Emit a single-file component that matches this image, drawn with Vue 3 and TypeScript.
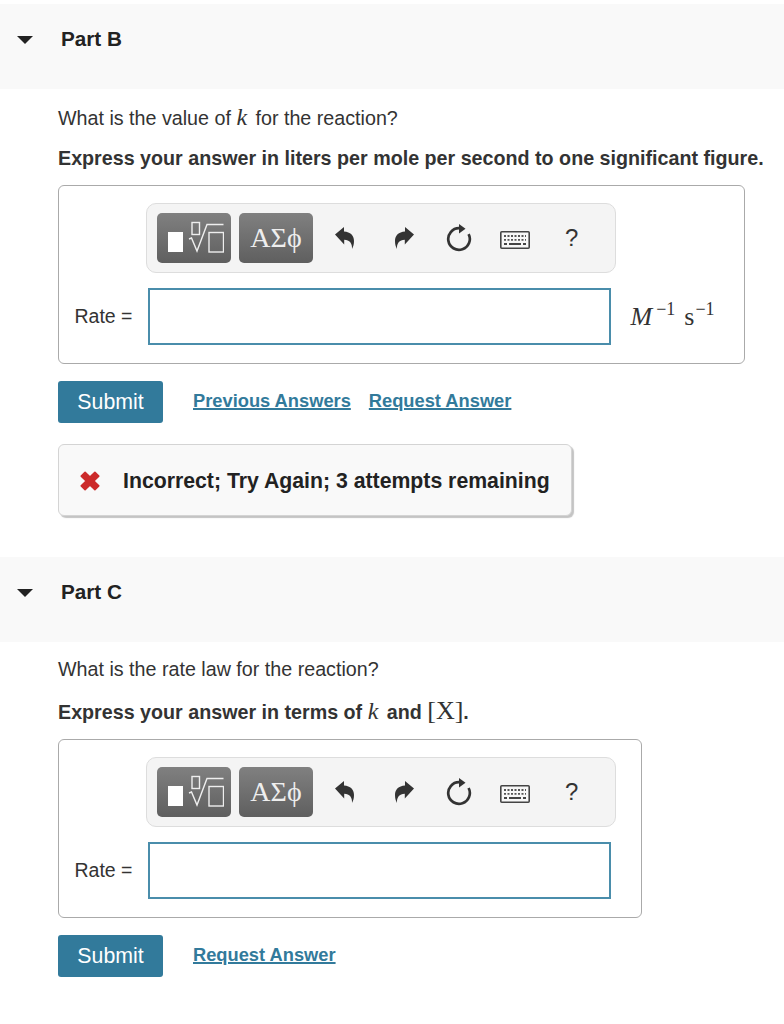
<script setup lang="ts">
interface Part {
  name: string
  units: boolean
  wide: boolean
  links: string[]
  error: boolean
}

const parts: Part[] = [
  { name: 'Part B', units: true, wide: true, links: ['Previous Answers', 'Request Answer'], error: true },
  { name: 'Part C', units: false, wide: false, links: ['Request Answer'], error: false },
]
</script>

<template>
  <main class="page">
    <section v-for="part in parts" :key="part.name" class="part">
      <header class="part__head">
        <span class="part__caret"></span>
        <h2 class="part__title">{{ part.name }}</h2>
      </header>

      <div class="part__body">
        <p v-if="part.units" class="part__question">
          What is the value of <i class="math">k</i> for the reaction?
        </p>
        <p v-else class="part__question part__question--tight">What is the rate law for the reaction?</p>

        <p v-if="part.units" class="part__instruction">
          Express your answer in liters per mole per second to one significant figure.
        </p>
        <p v-else class="part__instruction part__instruction--math">
          Express your answer in terms of <i class="math">k</i> and
          <span class="math math--x">[X]</span>.
        </p>

        <div class="answer" :class="{ 'answer--wide': part.wide }">
          <div class="toolbar">
            <button class="toolbar__btn" type="button" aria-label="Templates">
              <svg width="60" height="34" viewBox="0 0 60 34">
                <rect x="4" y="11" width="15" height="20" fill="#fff" />
                <g fill="none" stroke="#eee" stroke-width="1.400">
                  <rect x="28" y="1.500" width="7.500" height="12" />
                  <rect x="45" y="11.500" width="14.500" height="19.500" />
                  <path d="M25 18l2.500-1 5.500 13L43 3.500h16.500" />
                </g>
              </svg>
            </button>
            <button class="toolbar__btn toolbar__btn--greek" type="button">ΑΣϕ</button>

            <span class="toolbar__icon toolbar__icon--undo">
              <svg width="22" height="26" viewBox="0 0 22 26">
                <path d="M1 9.500 10 2v4.600c6.500.4 10 4 10 9.400 0 3-.6 5.400-2 8 .4-5.600-2.300-9-7.800-9.200v4.700z" fill="#333" />
              </svg>
            </span>
            <span class="toolbar__icon toolbar__icon--redo">
              <svg width="22" height="26" viewBox="0 0 22 26">
                <path d="M21 9.500 12 2v4.600C5.500 7 2 10.600 2 16c0 3 .6 5.400 2 8-.4-5.600 2.300-9 7.800-9.200v4.700z" fill="#333" />
              </svg>
            </span>
            <span class="toolbar__icon toolbar__icon--reset">
              <svg width="26" height="30" viewBox="0 0 26 30">
                <path d="M13 5.200A10.800 10.800 0 1 0 22.600 11" fill="none" stroke="#333" stroke-width="2.700" />
                <path d="M13 1l6.500 4.800L13 10.500z" fill="#333" />
              </svg>
            </span>
            <span class="toolbar__icon toolbar__icon--keys">
              <svg width="30" height="18" viewBox="0 0 30 18">
                <rect x=".8" y=".8" width="28.400" height="16.400" rx="1" fill="#f7f7f7" stroke="#444" stroke-width="1.600" />
                <path d="M4 5h22M4 8.800h22" stroke="#555" stroke-width="1.800" stroke-dasharray="2 1.500" />
                <path d="M4 13h3M9 13h12M23 13h3" stroke="#444" stroke-width="1.800" />
              </svg>
            </span>
            <span class="toolbar__help">?</span>
          </div>

          <div class="answer__row">
            <label class="answer__label">Rate =</label>
            <input class="answer__input" type="text" />
            <span v-if="part.units" class="answer__units">
              <i>M</i><sup>−1</sup><span class="answer__unit-s">s</span><sup class="answer__sup-s">−1</sup>
            </span>
          </div>
        </div>

        <div class="actions">
          <button class="actions__submit" type="button">Submit</button>
          <a v-for="link in part.links" :key="link" class="actions__link" href="#">{{ link }}</a>
        </div>

        <div v-if="part.error" class="feedback">
          <svg class="feedback__icon" width="24" height="24" viewBox="0 0 22 22">
            <path d="M3 6.500 6.500 3 11 7.500 15.500 3 19 6.500 14.500 11 19 15.500 15.500 19 11 14.500 6.500 19 3 15.500 7.500 11z" fill="#cc2a2a" stroke="#cc2a2a" stroke-width="1.500" stroke-linejoin="round" />
          </svg>
          <span>Incorrect; Try Again; 3 attempts remaining</span>
        </div>
      </div>
    </section>
  </main>
</template>

<style>
html,
body {
  background: #fff;
}
</style>

<style scoped>
.page {
  height: 1024px;
  overflow: hidden;
  padding-top: 4px;
  box-sizing: border-box;
  color: #333;
  font-family: "Liberation Sans", Arial, sans-serif;
}

.part + .part {
  margin-top: 41px;
}

.part__head {
  display: flex;
  align-items: flex-start;
  height: 85px;
  box-sizing: border-box;
  padding: 23px 0 0 17px;
  background: #f9f9f9;
}

.part__caret {
  width: 0;
  height: 0;
  margin: 9px 28px 0 0;
  border-top: 8px solid #222;
  border-right: 8.500px solid transparent;
  border-left: 8.500px solid transparent;
}

.part__title {
  margin: 0;
  color: #222;
  font-size: 20.700px;
  font-weight: 700;
  line-height: 23px;
}

.part__body {
  padding: 18px 0 0 58px;
}

.part__question {
  margin: 0;
  font-size: 19.700px;
  line-height: 22px;
}

.part__question--tight {
  margin-top: -2px;
}

.part__instruction {
  margin: 18px 0 0;
  font-size: 19.700px;
  font-weight: 700;
  line-height: 22px;
  white-space: nowrap;
}

.part__instruction--math {
  margin-top: 21px;
}

.math {
  padding-right: 3px;
  font-family: "Liberation Serif", serif;
  font-size: 24px;
  font-style: italic;
  font-weight: 400;
  line-height: 0;
}

.math--x {
  padding-right: 0;
  font-size: 26px;
  font-style: normal;
}

.answer {
  width: 584px;
  box-sizing: border-box;
  margin-top: 16px;
  padding: 17px 0 18px 87px;
  border: 1.500px solid #aaa;
  border-radius: 6px;
}

.answer--wide {
  width: 687px;
}

.toolbar {
  display: flex;
  align-items: center;
  width: 470px;
  height: 70px;
  box-sizing: border-box;
  padding-left: 10px;
  border: 1.500px solid #ddd;
  border-radius: 10px;
  background: #f4f4f4;
}

.toolbar__btn {
  display: flex;
  align-items: center;
  justify-content: center;
  width: 74px;
  height: 50px;
  margin-right: 8px;
  padding: 0;
  border: 0;
  border-radius: 5px;
  background: linear-gradient(#808080, #5f5f5f);
}

.toolbar__btn--greek {
  color: #eee;
  font-family: "Liberation Serif", serif;
  font-size: 28px;
}

.toolbar__icon {
  display: flex;
}

.toolbar__icon--undo { margin-left: 13px; }
.toolbar__icon--redo { margin-left: 37px; }
.toolbar__icon--reset { margin-left: 31px; }
.toolbar__icon--keys { margin: 4px 0 0 28px; }

.toolbar__help {
  margin-left: 35px;
  color: #333;
  font-size: 24px;
}

.answer__row {
  display: flex;
  align-items: center;
  margin: 15px 0 0 -71.500px;
}

.answer__label {
  width: 73px;
  font-size: 19.500px;
}

.answer__input {
  width: 463px;
  height: 57px;
  box-sizing: border-box;
  border: 2px solid #4a8dab;
  outline: none;
  background: #fff;
}

.answer__units {
  margin-left: 20px;
  font-family: "Liberation Serif", serif;
  font-size: 26px;
}

.answer__units sup {
  margin-left: 4px;
  font-size: 18px;
  line-height: 0;
}

.answer__units .answer__sup-s {
  margin-left: 1px;
}

.answer__unit-s {
  margin-left: 9px;
}

.actions {
  display: flex;
  align-items: center;
  margin-top: 17px;
}

.actions__submit {
  width: 105px;
  height: 42px;
  margin-right: 30px;
  padding: 0;
  border: 0;
  border-radius: 3px;
  background: #327a9b;
  color: #fff;
  font-family: inherit;
  font-size: 21.300px;
}

.actions__link {
  margin: -3px 18px 0 0;
  color: #327a9b;
  font-size: 18.300px;
  font-weight: 700;
  text-decoration-thickness: 2px;
  text-decoration-line: underline;
}

.feedback {
  display: flex;
  align-items: center;
  gap: 21px;
  width: 514px;
  height: 72px;
  box-sizing: border-box;
  margin-top: 21px;
  padding: 2px 0 0 19px;
  border: 1.500px solid #d4d4d4;
  border-radius: 6px;
  background: #f9f9f9;
  box-shadow: 2px 2px 1px #c4c4c4;
  color: #222;
  font-size: 21.250px;
  font-weight: 700;
}
</style>
